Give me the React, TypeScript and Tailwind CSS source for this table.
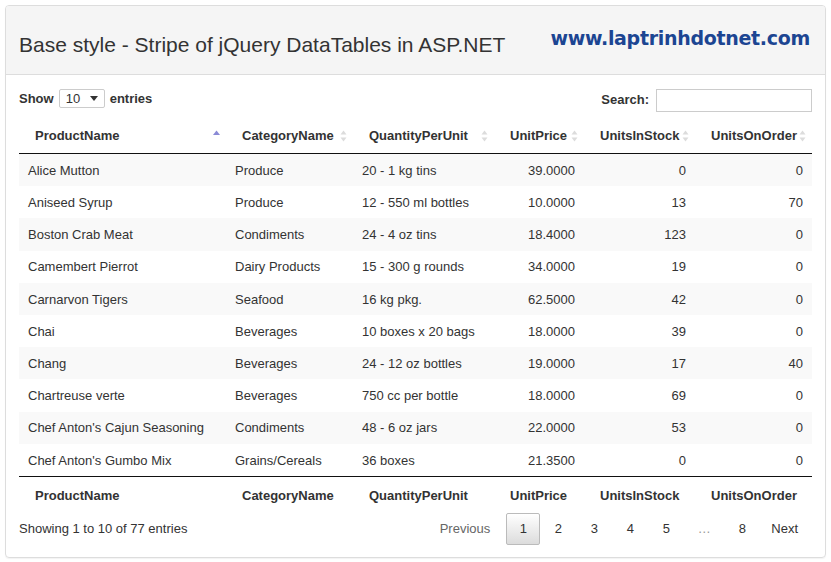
import React from "react"

type Row = [string, string, string, string, string, string]

const rows: Row[] = [
  ["Alice Mutton", "Produce", "20 - 1 kg tins", "39.0000", "0", "0"],
  ["Aniseed Syrup", "Produce", "12 - 550 ml bottles", "10.0000", "13", "70"],
  ["Boston Crab Meat", "Condiments", "24 - 4 oz tins", "18.4000", "123", "0"],
  ["Camembert Pierrot", "Dairy Products", "15 - 300 g rounds", "34.0000", "19", "0"],
  ["Carnarvon Tigers", "Seafood", "16 kg pkg.", "62.5000", "42", "0"],
  ["Chai", "Beverages", "10 boxes x 20 bags", "18.0000", "39", "0"],
  ["Chang", "Beverages", "24 - 12 oz bottles", "19.0000", "17", "40"],
  ["Chartreuse verte", "Beverages", "750 cc per bottle", "18.0000", "69", "0"],
  ["Chef Anton's Cajun Seasoning", "Condiments", "48 - 6 oz jars", "22.0000", "53", "0"],
  ["Chef Anton's Gumbo Mix", "Grains/Cereals", "36 boxes", "21.3500", "0", "0"],
]

const columns = ["ProductName", "CategoryName", "QuantityPerUnit", "UnitPrice", "UnitsInStock", "UnitsOnOrder"]
const widths = ["w-[207px]", "w-[127px]", "w-[141px]", "w-[90px]", "w-[111px]", "w-[117px]"]

const SortIcon = ({ asc }: { asc?: boolean }) => (
  <svg width="7" height="12" viewBox="0 0 7 12" className="shrink-0">
    {asc ? (
      <polygon points="0,5 7,5 3.5,0.5" fill="#8a8ad6" />
    ) : (
      <>
        <polygon points="0.5,4.5 6.5,4.5 3.5,0.5" fill="#dcdcdc" />
        <polygon points="0.5,7.5 6.5,7.5 3.5,11.5" fill="#dcdcdc" />
      </>
    )}
  </svg>
)

const App = () => {
  return (
    <div className="p-[5px] bg-white font-['Liberation_Sans',Arial,sans-serif] text-[#333]">
      <div className="w-[821px] border border-[#ddd] rounded-[4px] shadow-[0_1px_1px_rgba(0,0,0,0.05)] overflow-hidden">
        {/* Heading */}
        <div className="h-[69px] bg-[#f5f5f5] border-b border-[#ddd] flex items-center justify-between pl-[13px] pr-[15px]">
          <h3 className="text-[21px] leading-none text-[#333] mt-[8px]">Base style - Stripe of jQuery DataTables in ASP.NET</h3>
          <span className="font-['DejaVu_Sans',Verdana,sans-serif] font-bold text-[19px] text-[#1c4592] tracking-[-0.3px] -mt-[3px]">
            www.laptrinhdotnet.com
          </span>
        </div>

        {/* Body */}
        <div className="px-[13px] pt-[13px] pb-[12px] text-[13px]">
          <div className="h-[24px] flex items-center justify-between">
            <div className="flex items-center font-bold -mt-[3px]">
              <span>Show</span>
              <div className="ml-[5px] mr-[5px] w-[46px] h-[19px] border border-[#ccc] rounded-[2px] bg-white flex items-center justify-between px-[6px] font-normal">
                <span>10</span>
                <svg width="8" height="5" viewBox="0 0 8 5">
                  <polygon points="0,0 8,0 4,5" fill="#333" />
                </svg>
              </div>
              <span>entries</span>
            </div>
            <div className="flex items-center font-bold">
              <span className="mr-[7px]">Search:</span>
              <div className="w-[156px] h-[23px] border border-[#ccc] bg-white" />
            </div>
          </div>

          <table className="mt-[5px] w-[793px] table-fixed border-separate border-spacing-0">
            <colgroup>
              {widths.map((w, i) => (
                <col key={i} className={w} />
              ))}
            </colgroup>
            <thead>
              <tr>
                {columns.map((c, i) => (
                  <th key={c} className="h-[37px] border-b border-[#111] p-0 pt-[1px] text-left font-bold">
                    <div className="flex items-center justify-between pl-[16px] pr-[6px]">
                      <span>{c}</span>
                      <SortIcon asc={i === 0} />
                    </div>
                  </th>
                ))}
              </tr>
            </thead>
            <tbody>
              {rows.map((r, ri) => (
                <tr key={ri} className={ri % 2 === 0 ? "bg-[#f9f9f9]" : "bg-white"}>
                  {r.map((v, ci) => (
                    <td
                      key={ci}
                      className={`h-[32.2px] px-[9px] pt-[1px] pb-0 whitespace-nowrap ${ci >= 3 ? "text-right" : "text-left"}`}
                    >
                      {v}
                    </td>
                  ))}
                </tr>
              ))}
            </tbody>
            <tfoot>
              <tr>
                {columns.map((c) => (
                  <th key={c} className="h-[37px] border-t border-[#111] p-0 pl-[16px] pt-[1px] text-left font-bold">
                    {c}
                  </th>
                ))}
              </tr>
            </tfoot>
          </table>

          <div className="h-[32px] flex items-center justify-between">
            <span>Showing 1 to 10 of 77 entries</span>
            <div className="flex items-center">
              <span className="px-[14px] h-[32px] leading-[32px] text-[#666]">Previous</span>
              <span className="ml-[2px] w-[34px] h-[32px] leading-[30px] text-center border border-[#bbb] rounded-[2px] bg-gradient-to-b from-white to-[#dcdcdc]">
                1
              </span>
              {["2", "3", "4", "5"].map((p) => (
                <span key={p} className="w-[36px] h-[32px] leading-[32px] text-center">
                  {p}
                </span>
              ))}
              <span className="w-[40px] text-center text-[#999]">…</span>
              <span className="w-[36px] h-[32px] leading-[32px] text-center">8</span>
              <span className="pl-[11px] pr-[14px] h-[32px] leading-[32px]">Next</span>
            </div>
          </div>
        </div>
      </div>
    </div>
  )
}

export default App
